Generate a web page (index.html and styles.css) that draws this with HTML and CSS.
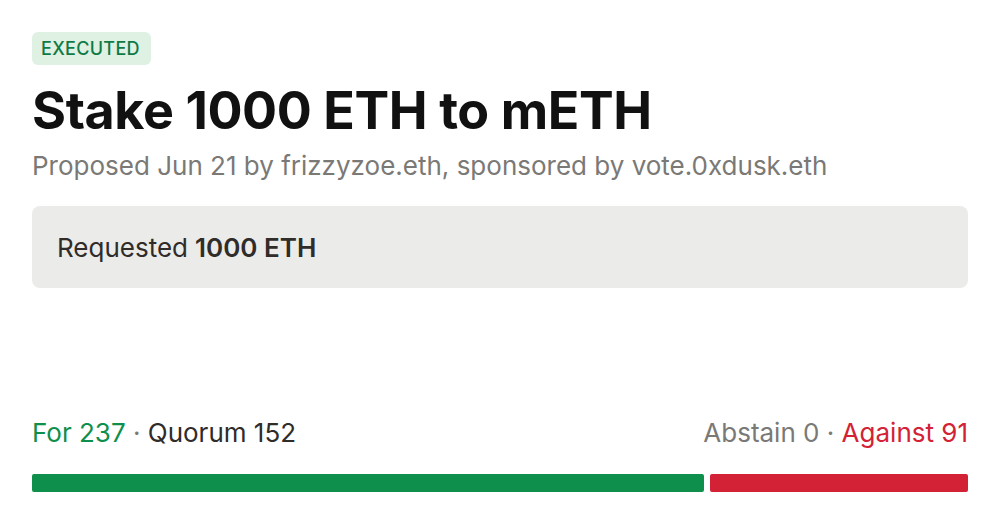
FILE: index.html
```html
<!DOCTYPE html>
<html>
<head>
<meta charset="utf-8">
<link rel="stylesheet" href="styles.css">
</head>
<body>
<main class="proposal">
  <span class="badge">EXECUTED</span>
  <h1 class="title">Stake 1000 ETH to mETH</h1>
  <p class="meta">Proposed Jun 21 by frizzyzoe.eth, sponsored by vote.0xdusk.eth</p>
  <div class="request">Requested <strong>1000 ETH</strong></div>
  <div class="votes">
    <div class="vote-labels">
      <div><span class="for">For 237</span> <span class="sep">·</span> <span class="quorum">Quorum 152</span></div>
      <div><span class="abstain">Abstain 0</span> <span class="sep">·</span> <span class="against">Against 91</span></div>
    </div>
    <div class="bar">
      <div class="bar-for" style="flex-grow: 237"></div>
      <div class="bar-against" style="flex-grow: 91"></div>
    </div>
  </div>
</main>
</body>
</html>
```
FILE: styles.css
```css
* { box-sizing: border-box; }
html, body { margin: 0; padding: 0; background: #fff; }
body { font-family: Inter, "Noto Sans", sans-serif; color: #111; }
.proposal {
  padding: 32px 32px 0 32px;
  display: flex;
  flex-direction: column;
  align-items: flex-start;
}
.badge {
  display: inline-block;
  background: #dff1e3;
  color: #0f7a45;
  font-size: 18px;
  font-weight: 500;
  letter-spacing: 0.3px;
  line-height: 33px;
  height: 33px;
  padding: 0 11px 0 9px;
  border-radius: 6px;
}
.title {
  margin: 17px 0 0 0;
  font-size: 52px;
  font-weight: 700;
  line-height: 58px;
  letter-spacing: -0.4px;
  color: #111;
}
.meta {
  margin: 10px 0 0 0;
  font-size: 26px;
  line-height: 32px;
  color: #7a7976;
}
.request {
  align-self: stretch;
  margin-top: 24px;
  height: 82px;
  background: #ebebe9;
  border-radius: 8px;
  padding: 0 25px;
  display: flex;
  align-items: center;
  font-size: 26px;
  color: #2f2c29;
}
.request strong { font-weight: 600; margin-left: 7px; }
.votes { align-self: stretch; margin-top: 129px; }
.vote-labels {
  display: flex;
  justify-content: space-between;
  font-size: 26px;
  line-height: 32px;
}
.for { color: #0e8f4b; }
.quorum { color: #2f2c29; }
.sep { color: #7a7976; }
.abstain { color: #7a7976; }
.against { color: #d32236; }
.bar {
  margin-top: 25px;
  display: flex;
  gap: 6px;
  height: 18px;
}
.bar-for { background: #0e904c; border-radius: 2px; flex-basis: 0; }
.bar-against { background: #d32236; border-radius: 2px; flex-basis: 0; }
```
